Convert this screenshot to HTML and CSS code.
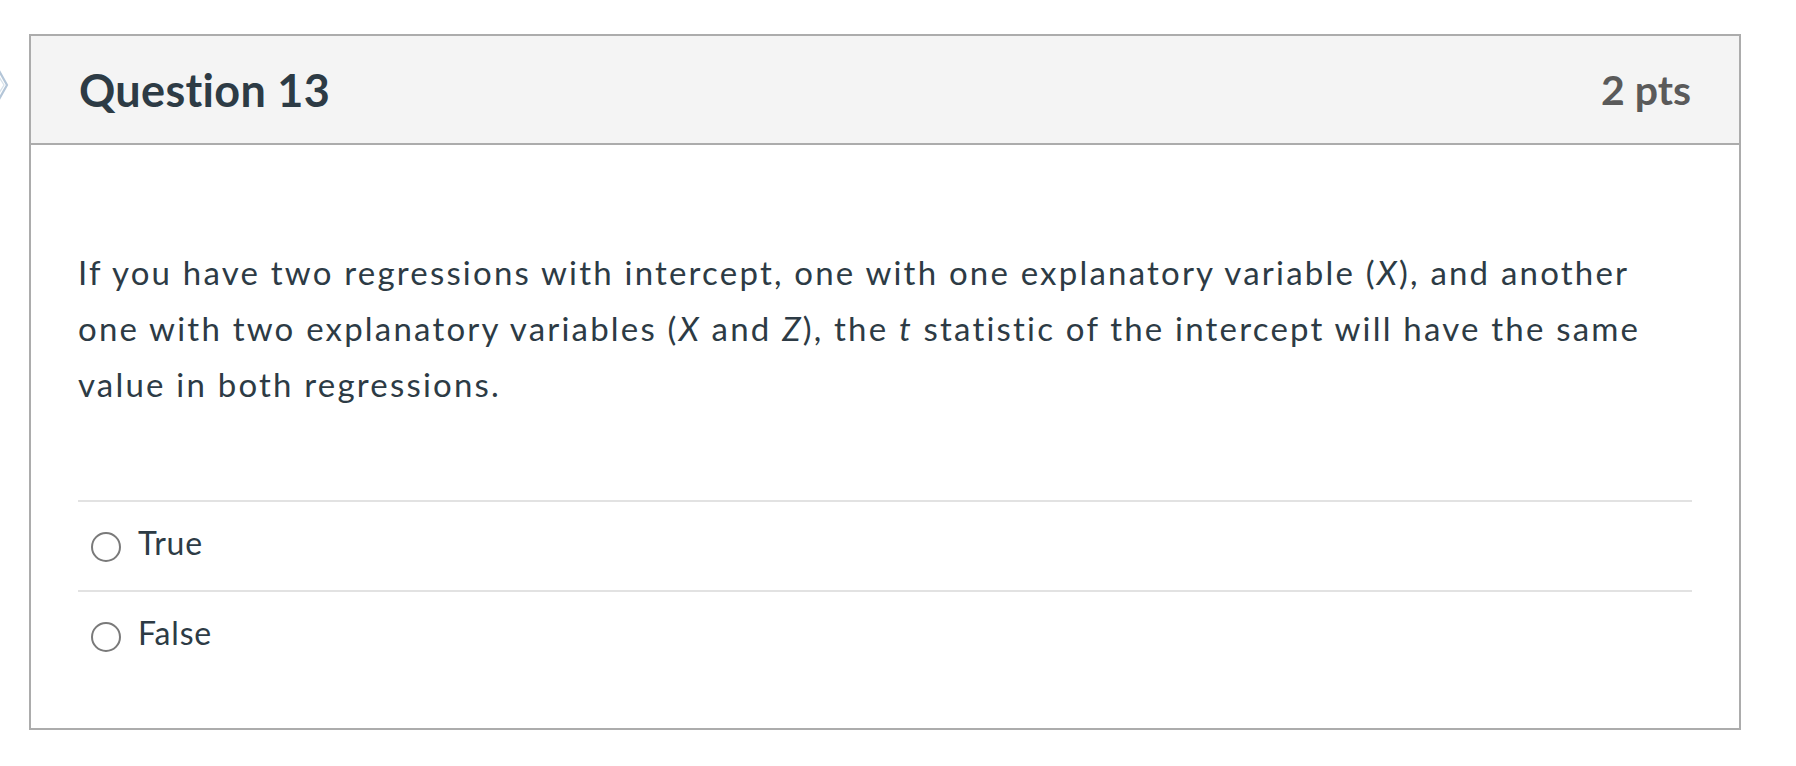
FILE: index.html
```html
<!DOCTYPE html>
<html lang="en">
<head>
<meta charset="utf-8">
<title>Question 13</title>
<link rel="stylesheet" href="styles.css">
</head>
<body>
<div class="page">
  <svg class="flag" width="12" height="40" viewBox="0 0 12 40" aria-hidden="true">
    <path d="M-2 3 L7 19 L-2 35" fill="none" stroke="#b4c6d8" stroke-width="2.2"/>
    <path d="M-4 6 L4 19 L-4 32" fill="none" stroke="#d6e1ea" stroke-width="1.2"/>
  </svg>
  <div class="question">
    <div class="q-header">
      <h2 class="q-title">Question 13</h2>
      <span class="q-points">2 pts</span>
    </div>
    <div class="q-body">
      <p class="q-text">If you have two regressions with intercept, one with one explanatory variable (<em>X</em>), and another<br>one with two explanatory variables (<em>X</em> and <em>Z</em>), the <em>t</em> statistic of the intercept will have the same<br>value in both regressions.</p>
      <div class="answers">
        <label class="answer"><span class="radio"></span><span class="answer-label">True</span></label>
        <label class="answer"><span class="radio"></span><span class="answer-label">False</span></label>
      </div>
    </div>
  </div>
</div>
</body>
</html>
```

FILE: styles.css
```css
* { box-sizing: border-box; }
html, body { margin: 0; padding: 0; background: #ffffff; }
body { font-family: Lato, "Noto Sans", sans-serif; color: #2d3b45; }

.page {
  position: relative;
  padding: 34px 0 0 29px;
}

.flag {
  position: absolute;
  left: 0;
  top: 66px;
}

.question {
  width: 1712px;
  border: 2px solid #acacac;
  background: #fff;
}

.q-header {
  height: 109px;
  background: #f4f4f4;
  border-bottom: 2px solid #acacac;
  display: flex;
  align-items: center;
  justify-content: space-between;
  padding: 0 48px;
}

.q-title {
  margin: 0;
  font-size: 45px;
  line-height: 54px;
  font-weight: 700;
  letter-spacing: 0.3px;
  color: #2d3b45;
}

.q-points {
  font-size: 41px;
  line-height: 54px;
  font-weight: 700;
  color: #5a5a5a;
}

.q-body {
  padding: 99px 47px 48px 47px;
}

.q-text {
  margin: 0 0 88px 0;
  font-size: 33px;
  line-height: 56px;
  letter-spacing: 2.2px;
  color: #2d3b45;
}

.q-text em { font-style: italic; }

.answers { display: flex; flex-direction: column; }

.answer {
  display: flex;
  align-items: flex-start;
  height: 90px;
  border-top: 2px solid #e2e2e2;
  padding: 22px 0 0 13px;
}

.radio {
  width: 30px;
  height: 30px;
  border: 2px solid #7a7a7a;
  border-radius: 50%;
  margin-top: 8px;
  flex: none;
}

.answer-label {
  margin-left: 17px;
  font-size: 32px;
  line-height: 37px;
  letter-spacing: 0.8px;
  color: #2d3b45;
}
```
